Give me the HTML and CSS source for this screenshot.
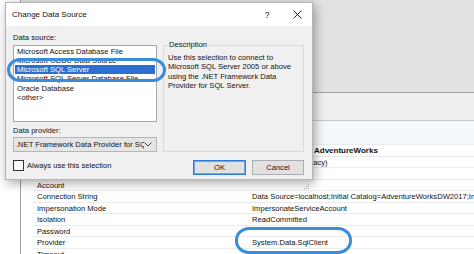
FILE: index.html
```html
<!DOCTYPE html>
<html lang="en">
<head>
    <meta charset="UTF-8">
    <title>Change Data Source</title>
    <link rel="stylesheet" href="styles.css">
</head>
<body>
    <div class="page">
        <div class="side"></div>
        <div class="main">
            <div class="toolbar-area"></div>
            <div class="band"></div>
            <div class="props">
                <div class="prop-top"></div>
                <div class="prop-row"><span class="prop-name"></span><span class="prop-value shifted"><b>AdventureWorks</b></span></div>
                <div class="prop-row"><span class="prop-name"></span><span class="prop-value shifted legacy">(Legacy)</span></div>
                <div class="prop-row"><span class="prop-name"></span><span class="prop-value"></span></div>
                <div class="prop-row"><span class="prop-name">Account</span><span class="prop-value"></span></div>
                <div class="prop-row"><span class="prop-name">Connection String</span><span class="prop-value">Data Source=localhost;Initial Catalog=AdventureWorksDW2017;Integrated Security=SSPI</span></div>
                <div class="prop-row"><span class="prop-name">Impersonation Mode</span><span class="prop-value">ImpersonateServiceAccount</span></div>
                <div class="prop-row"><span class="prop-name">Isolation</span><span class="prop-value">ReadCommitted</span></div>
                <div class="prop-row"><span class="prop-name">Password</span><span class="prop-value"></span></div>
                <div class="prop-row"><span class="prop-name">Provider</span><span class="prop-value">System.Data.SqlClient</span></div>
                <div class="prop-row"><span class="prop-name">Timeout</span><span class="prop-value"></span></div>
            </div>
        </div>
    </div>

    <!-- highlight around the provider value -->
    <div class="mark mark-provider"></div>

    <div class="dialog">
        <div class="title-bar">
            <span class="title">Change Data Source</span>
            <span class="title-btn help">?</span>
            <span class="title-btn close">
                <svg width="9" height="9" viewBox="0 0 9 9"><path d="M0.5 0.5 L8.5 8.5 M8.5 0.5 L0.5 8.5" stroke="#222" stroke-width="1"/></svg>
            </span>
        </div>
        <div class="dialog-body">
            <div class="columns">
                <div class="col-left">
                    <div class="field-label">Data source:</div>
                    <div class="listbox">
                        <div class="list-item">Microsoft Access Database File</div>
                        <div class="list-item">Microsoft ODBC Data Source</div>
                        <div class="list-item selected">Microsoft SQL Server</div>
                        <div class="list-item">Microsoft SQL Server Database File</div>
                        <div class="list-item">Oracle Database</div>
                        <div class="list-item">&lt;other&gt;</div>
                    </div>
                    <div class="field-label provider-label">Data provider:</div>
                    <div class="combo">
                        <span class="combo-text">.NET Framework Data Provider for SQL Server</span>
                        <svg class="chevron" width="8" height="5" viewBox="0 0 8 5"><path d="M0.5 0.5 L4 4 L7.5 0.5" fill="none" stroke="#444" stroke-width="1"/></svg>
                    </div>
                </div>
                <fieldset class="group">
                    <legend>Description</legend>
                    <p>Use this selection to connect to Microsoft SQL Server 2005 or above using the .NET Framework Data Provider for SQL Server.</p>
                </fieldset>
            </div>
            <div class="footer">
                <label class="check"><span class="box"></span>Always use this selection</label>
                <div class="buttons">
                    <button class="btn default">OK</button>
                    <button class="btn">Cancel</button>
                </div>
            </div>
            <svg class="grip" width="6" height="6" viewBox="0 0 6 6">
                <rect x="4" y="0" width="1" height="1" fill="#aaa"/>
                <rect x="2" y="2" width="1" height="1" fill="#aaa"/>
                <rect x="4" y="2" width="1" height="1" fill="#aaa"/>
                <rect x="0" y="4" width="1" height="1" fill="#aaa"/>
                <rect x="2" y="4" width="1" height="1" fill="#aaa"/>
                <rect x="4" y="4" width="1" height="1" fill="#aaa"/>
            </svg>
        </div>
        <!-- highlight around the selected source -->
        <div class="mark mark-source"></div>
    </div>
</body>
</html>
```

FILE: styles.css
```css
body {
    margin: 0;
    width: 474px;
    height: 254px;
    overflow: hidden;
    position: relative;
    background-color: #fff;
    font-family: 'Liberation Sans', Arial, sans-serif;
    font-size: 7.6px;
    color: #111;
}

/* page behind the dialog */
.page {
    display: flex;
    height: 254px;
}

.side {
    width: 20px;
    border-right: 1px solid #a0a0a0;
    background-color: #fff;
}

.main {
    flex: 1;
    min-width: 0;
}

.toolbar-area {
    height: 92px;
    background-color: #e2e2e2;
    border-bottom: 1px solid #a2a2a2;
}

.band {
    height: 27px;
    background-color: #efefef;
    border-bottom: 1px solid #c8c8c8;
}

.props {
    margin-left: 12px;
}

.prop-top {
    height: 23px;
    background-color: #f5f8fc;
}

.prop-row {
    display: grid;
    grid-template-columns: 217px 1fr;
    height: 11.5px;
    line-height: 11.5px;
    border-top: 1px solid #ececec;
    box-sizing: border-box;
    white-space: nowrap;
}

.prop-name {
    padding-left: 4px;
}

.prop-value {
    padding-left: 2px;
    overflow: hidden;
}

.prop-value.shifted {
    padding-left: 64px;
}

.prop-value.legacy {
    text-indent: -16px;
}

.prop-value b {
    font-size: 8px;
}

/* blue hand-drawn marks */
.mark {
    position: absolute;
    border: 3px solid #3a8ddb;
    box-sizing: border-box;
}

.mark-provider {
    left: 235px;
    top: 227px;
    width: 117px;
    height: 27px;
    border-radius: 14px / 13px;
}

.mark-source {
    left: 1px;
    top: 55px;
    width: 159px;
    height: 24px;
    border-radius: 13px / 12px;
}

/* dialog */
.dialog {
    position: absolute;
    left: 5px;
    top: 2px;
    width: 308px;
    height: 178px;
    box-sizing: border-box;
    border: 1px solid #b4b4b4;
    background-color: #f0f0f0;
    box-shadow: 2px 3px 10px rgba(0, 0, 0, 0.35);
}

.title-bar {
    display: flex;
    align-items: center;
    height: 23px;
    background-color: #fff;
}

.title {
    font-size: 8px;
    padding-left: 6px;
    color: #111;
}

.title-btn {
    width: 30px;
    text-align: center;
    font-size: 8.5px;
    color: #222;
}

.help {
    margin-left: auto;
}

.close svg {
    display: block;
    margin: 0 auto;
}

.dialog-body {
    position: relative;
    padding: 7px 8px 0 7px;
}

.columns {
    display: grid;
    grid-template-columns: 144px 141px;
    gap: 6px;
}

.field-label {
    height: 10px;
    line-height: 10px;
    margin-bottom: 2px;
}

.provider-label {
    margin-top: 4px;
    margin-bottom: 1px;
}

.listbox {
    height: 77px;
    box-sizing: border-box;
    border: 1px solid #a3a6ab;
    background-color: #fff;
    padding: 0.5px 1px;
}

.list-item {
    line-height: 9.3px;
    height: 9.3px;
    padding-left: 2px;
    white-space: nowrap;
}

.list-item.selected {
    background-color: #2b6fd1;
    color: #fff;
}

.combo {
    display: flex;
    align-items: center;
    height: 15px;
    box-sizing: border-box;
    border: 1px solid #b5b5b5;
    background-color: #e5e5e5;
    padding: 0 4px 0 2px;
}

.combo-text {
    width: 128px;
    overflow: hidden;
    white-space: nowrap;
}

.chevron {
    margin-left: auto;
}

.group {
    margin: 7px 0 0;
    padding: 0 4px;
    height: 112px;
    box-sizing: border-box;
    border: 1px solid #dadada;
    min-width: 0;
}

.group legend {
    padding: 0 1px;
    line-height: 10px;
}

.group p {
    margin: 3px 0 0;
    line-height: 9.3px;
}

.footer {
    display: flex;
    align-items: flex-start;
    margin-top: 8px;
}

.check {
    display: flex;
    align-items: center;
    height: 11px;
}

.box {
    width: 9px;
    height: 9px;
    border: 1px solid #333;
    background-color: #fff;
    margin-right: 3px;
}

.buttons {
    display: flex;
    gap: 6px;
    margin-left: auto;
}

.btn {
    height: 15px;
    width: 52px;
    padding: 0;
    font-family: inherit;
    font-size: 7.6px;
    color: #111;
    background-color: #e1e1e1;
    border: 1px solid #adadad;
}

.btn.default {
    width: 53px;
    border-color: #2e7bd6;
    box-shadow: inset 0 0 0 1px #6ea6e6;
}

.grip {
    position: absolute;
    right: 2px;
    bottom: -15px;
}
```
